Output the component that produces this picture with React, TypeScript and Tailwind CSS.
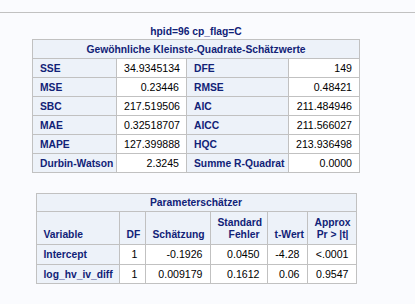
const th = "whitespace-nowrap border border-[#c1c1c1] bg-[#edf2f9] px-[7px] text-[10.3px] font-bold text-[#112277]";
const td = "whitespace-nowrap border border-[#c1c1c1] bg-white px-[7px] text-right text-[10.6px] text-black";

const fitStats: [string, string, string, string][] = [
  ["SSE", "34.9345134", "DFE", "149"],
  ["MSE", "0.23446", "RMSE", "0.48421"],
  ["SBC", "217.519506", "AIC", "211.484946"],
  ["MAE", "0.32518707", "AICC", "211.566027"],
  ["MAPE", "127.399888", "HQC", "213.936498"],
  ["Durbin-Watson", "2.3245", "Summe R-Quadrat", "0.0000"],
];

const params = [
  ["Intercept", "1", "-0.1926", "0.0450", "-4.28", "<.0001"],
  ["log_hv_iv_diff", "1", "0.009179", "0.1612", "0.06", "0.9547"],
];

export default function App() {
  return (
    <div className="min-h-[304px] w-[415px] bg-[#fafbfe] pt-[12px] font-['Liberation_Sans',Arial,sans-serif] text-[11px] leading-[13px]">
      <div className="h-px bg-[#c1c1c1]" />
      <div className="flex w-[392px] flex-col items-center pt-[12px]">
        <div className="mb-[1px] text-[10.3px] font-bold text-[#112277]">hpid=96 cp_flag=C</div>
        <table className="w-[327px] table-fixed border-collapse">
          <colgroup>
            <col className="w-[84px]" />
            <col className="w-[70px]" />
            <col className="w-[102px]" />
            <col className="w-[71px]" />
          </colgroup>
          <thead>
            <tr className="h-[19px]">
              <th colSpan={4} className={th + " text-center"}>
                Gewöhnliche Kleinste-Quadrate-Schätzwerte
              </th>
            </tr>
          </thead>
          <tbody>
            {fitStats.map((r) => (
              <tr key={r[0]} className="h-[19px]">
                <th className={th + " text-left"}>{r[0]}</th>
                <td className={td}>{r[1]}</td>
                <th className={th + " text-left"}>{r[2]}</th>
                <td className={td}>{r[3]}</td>
              </tr>
            ))}
          </tbody>
        </table>

        <table className="mt-[20px] w-[320px] table-fixed border-collapse">
          <colgroup>
            <col className="w-[83px]" />
            <col className="w-[26px]" />
            <col className="w-[65px]" />
            <col className="w-[57px]" />
            <col className="w-[40px]" />
            <col className="w-[49px]" />
          </colgroup>
          <thead>
            <tr className="h-[18px]">
              <th colSpan={6} className={th + " text-center"}>
                Parameterschätzer
              </th>
            </tr>
            <tr className="h-[33px]">
              <th className={th + " text-left align-bottom pb-[3px]"}>Variable</th>
              <th className={th + " text-right align-bottom pb-[3px]"}>DF</th>
              <th className={th + " text-right align-bottom pb-[3px]"}>Schätzung</th>
              <th className={th + " text-right align-bottom pb-[3px] leading-[12px]"}>
                Standard
                <br />
                Fehler
              </th>
              <th className={th + " text-right align-bottom pb-[3px]"}>t-Wert</th>
              <th className={th + " text-right align-bottom pb-[3px] leading-[12px]"}>
                Approx
                <br />
                Pr &gt; |t|
              </th>
            </tr>
          </thead>
          <tbody>
            {params.map((r, k) => (
              <tr key={r[0]} className={k === 0 ? "h-[20px]" : "h-[19px]"}>
                <th className={th + " text-left"}>{r[0]}</th>
                {r.slice(1).map((v, i) => (
                  <td key={i} className={td}>
                    {v}
                  </td>
                ))}
              </tr>
            ))}
          </tbody>
        </table>
      </div>
    </div>
  );
}
